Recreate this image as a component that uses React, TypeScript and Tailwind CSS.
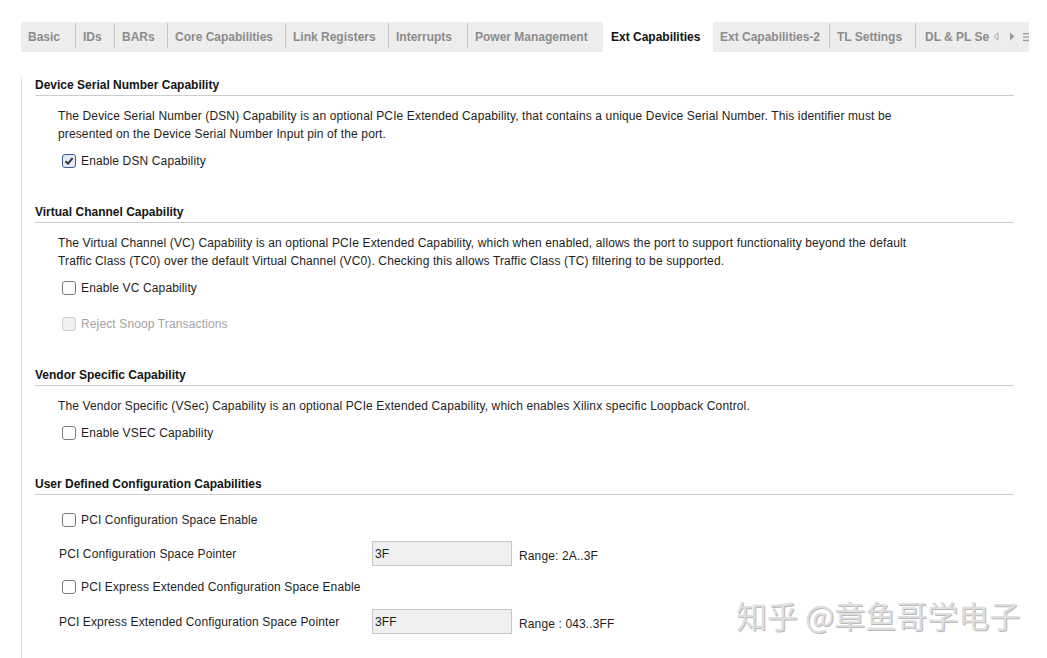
import React from "react";

type Tab = { label: string; w: string; active?: boolean; sep: boolean };

const tabs: Tab[] = [
  { label: "Basic", w: "w-[55px]", sep: true },
  { label: "IDs", w: "w-[39px]", sep: true },
  { label: "BARs", w: "w-[53px]", sep: true },
  { label: "Core Capabilities", w: "w-[118px]", sep: true },
  { label: "Link Registers", w: "w-[103px]", sep: true },
  { label: "Interrupts", w: "w-[79px]", sep: true },
  { label: "Power Management", w: "w-[135px]", sep: false },
  { label: "Ext Capabilities", w: "w-[110px]", active: true, sep: false },
  { label: "Ext Capabilities-2", w: "w-[117px]", sep: true },
  { label: "TL Settings", w: "w-[86px]", sep: true },
];

function Checkbox({ checked, disabled, label }: { checked?: boolean; disabled?: boolean; label: string }) {
  return (
    <div className="flex items-center h-[18px] ml-[27px]">
      <div
        className={
          checked
            ? "w-[14px] h-[14px] rounded-[3px] border border-[#3d5f8f] bg-[#e3ebf6] flex items-center justify-center"
            : disabled
            ? "w-[14px] h-[14px] rounded-[3px] border border-[#cfcfcf] bg-[#f0f0f0]"
            : "w-[14px] h-[14px] rounded-[3px] border border-[#7a7a7a] bg-white"
        }
      >
        {checked && (
          <svg width="10" height="10" viewBox="0 0 10 10">
            <path d="M1.5 5.2 L4 7.6 L8.6 2.2" fill="none" stroke="#2f2f2f" strokeWidth="1.9" />
          </svg>
        )}
      </div>
      <span
        className={
          disabled
            ? "ml-[5px] tracking-[0.13px] text-[#a3a3a3]"
            : "ml-[5px] tracking-[0.13px] text-[#1e1e1e]"
        }
      >
        {label}
      </span>
    </div>
  );
}

function Heading({ children, mt }: { children: React.ReactNode; mt: string }) {
  return (
    <div className={`${mt} leading-[16px] pb-[2px] border-b border-[#cdcdcd] font-bold text-[#141414]`}>
      {children}
    </div>
  );
}

function PointerRow({ label, value, range }: { label: string; value: string; range: string }) {
  return (
    <div className="flex items-center h-[25px] ml-[24px] tracking-[0.13px]">
      <span className="w-[313px] text-[#1e1e1e]">{label}</span>
      <div className="w-[140px] h-[25px] bg-[#efefef] border border-[#c6c6c6] flex items-center pl-[2px] text-[#1e1e1e]">
        {value}
      </div>
      <span className="ml-[7px] mt-[4px] text-[#1e1e1e]">{range}</span>
    </div>
  );
}

export default function App() {
  return (
    <div
      className="relative w-[1047px] h-[658px] bg-white overflow-hidden text-[12px]"
      style={{ fontFamily: '"Liberation Sans", Arial, sans-serif' }}
    >
      <div className="pt-[22px] pl-[21px]">
        {/* Tab bar */}
        <div className="flex w-[1008px] h-[30px] bg-[#ededed]">
          {tabs.map((t) => (
            <div key={t.label} className={`${t.w} h-[30px] shrink-0 ${t.active ? "bg-white" : ""}`}>
              <div
                className={`h-[25px] mt-[1px] pt-[2px] flex items-center pl-[7px] font-bold whitespace-nowrap ${
                  t.sep ? "border-r border-[#c9c9c9]" : ""
                } ${t.active ? "text-[#111] pl-[8px]" : "text-[#8c8c8c]"}`}
              >
                {t.label}
              </div>
            </div>
          ))}
          <div className="h-[30px] flex-1 flex items-start">
            <div className="h-[25px] mt-[1px] pt-[2px] flex items-center pl-[9px] font-bold text-[#8c8c8c] whitespace-nowrap">
              DL &amp; PL Se
            </div>
            <div className="h-[25px] mt-[1px] pt-[2px] flex items-center">
              <svg width="6" height="9" viewBox="0 0 6 9" className="ml-[4px]">
                <path d="M5 0.8 L1 4.5 L5 8.2 Z" fill="none" stroke="#a5a5a5" strokeWidth="1" />
              </svg>
              <svg width="6" height="9" viewBox="0 0 6 9" className="ml-[10px]">
                <path d="M1 0.5 L5.5 4.5 L1 8.5 Z" fill="#9a9a9a" />
              </svg>
              <svg width="6" height="10" viewBox="0 0 6 10" className="ml-[8px]">
                <rect x="0" y="1" width="6" height="1.3" fill="#9a9a9a" />
                <rect x="0" y="4.4" width="6" height="1.3" fill="#9a9a9a" />
                <rect x="0" y="7.8" width="6" height="1.3" fill="#9a9a9a" />
              </svg>
            </div>
          </div>
        </div>

        {/* Panel */}
        <div className="h-[589px] w-[1008px] border-l border-[#e2e2e2] pl-[13px] pr-[15px]">
          <Heading mt="mt-[25px]">Device Serial Number Capability</Heading>
          <div className="mt-[11px] ml-[23px] w-[860px] leading-[18px] tracking-[0.13px] text-[#1e1e1e]">
            The Device Serial Number (DSN) Capability is an optional PCIe Extended Capability, that contains a unique
            Device Serial Number. This identifier must be presented on the Device Serial Number Input pin of the port.
          </div>
          <div className="mt-[9px]">
            <Checkbox checked label="Enable DSN Capability" />
          </div>

          <Heading mt="mt-[34px]">Virtual Channel Capability</Heading>
          <div className="mt-[11px] ml-[23px] w-[860px] leading-[18px] tracking-[0.13px] text-[#1e1e1e]">
            The Virtual Channel (VC) Capability is an optional PCIe Extended Capability, which when enabled, allows the
            port to support functionality beyond the default Traffic Class (TC0) over the default Virtual Channel (VC0).
            Checking this allows Traffic Class (TC) filtering to be supported.
          </div>
          <div className="mt-[9px]">
            <Checkbox label="Enable VC Capability" />
          </div>
          <div className="mt-[18px]">
            <Checkbox disabled label="Reject Snoop Transactions" />
          </div>

          <Heading mt="mt-[34px]">Vendor Specific Capability</Heading>
          <div className="mt-[11px] ml-[23px] w-[860px] leading-[18px] tracking-[0.13px] text-[#1e1e1e]">
            The Vendor Specific (VSec) Capability is an optional PCIe Extended Capability, which enables Xilinx specific
            Loopback Control.
          </div>
          <div className="mt-[9px]">
            <Checkbox label="Enable VSEC Capability" />
          </div>

          <Heading mt="mt-[34px]">User Defined Configuration Capabilities</Heading>
          <div className="mt-[16px]">
            <Checkbox label="PCI Configuration Space Enable" />
          </div>
          <div className="mt-[12px]">
            <PointerRow label="PCI Configuration Space Pointer" value="3F" range="Range: 2A..3F" />
          </div>
          <div className="mt-[12px]">
            <Checkbox label="PCI Express Extended Configuration Space Enable" />
          </div>
          <div className="mt-[13px]">
            <PointerRow label="PCI Express Extended Configuration Space Pointer" value="3FF" range="Range : 043..3FF" />
          </div>
        </div>
      </div>

      {/* Watermark */}
      <div
        className="absolute left-[736px] top-[595px] text-[31px] leading-[40px] text-[#dedede] whitespace-nowrap"
        style={{
          fontFamily: '"Noto Sans CJK SC", sans-serif',
          textShadow: "1px 1px 0 #b9b9b9",
        }}
      >
        知乎 @章鱼哥学电子
      </div>
    </div>
  );
}
